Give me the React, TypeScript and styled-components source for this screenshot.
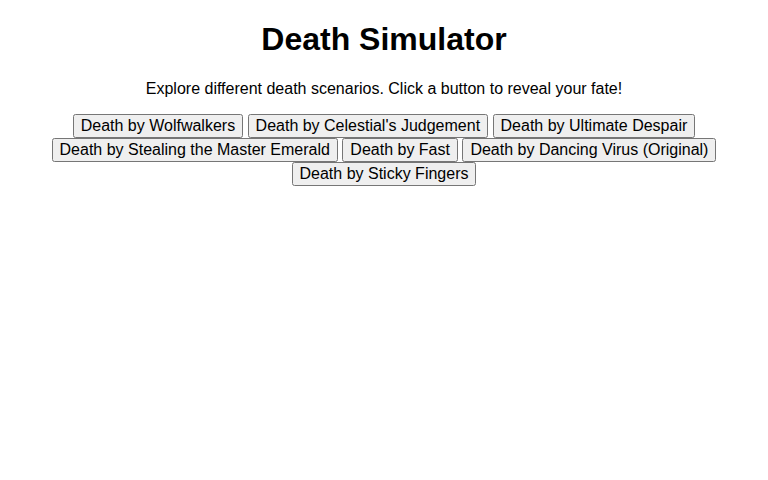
import React, { useState } from "react";
import styled, { createGlobalStyle } from "styled-components";

const GlobalStyle = createGlobalStyle`
    body {
        margin: 0;
        background: #ffffff;
        font-family: "Liberation Sans", Arial, sans-serif;
        color: #000000;
    }
`;

const PageStyled = styled.div`
    text-align: center;
`;

const TitleStyled = styled.h1`
    font-size: 32px;
    font-weight: bold;
    margin: 21.44px 0;
`;

const IntroStyled = styled.p`
    font-size: 16px;
    margin: 16px 0;
`;

const ButtonRowStyled = styled.div`
    display: flex;
    flex-wrap: wrap;
    justify-content: center;
    column-gap: 4.45px;
    padding: 0 50px;
`;

const DeathButtonStyled = styled.button`
    font-family: "Liberation Sans", Arial, sans-serif;
    font-size: 16px;
    line-height: normal;
    padding: 1px 6px;
    color: #000000;
    cursor: pointer;
`;

const FateStyled = styled.p`
    font-size: 16px;
    margin: 16px 0;
`;

const scenarios = [
    "Wolfwalkers",
    "Celestial's Judgement",
    "Ultimate Despair",
    "Stealing the Master Emerald",
    "Fast",
    "Dancing Virus (Original)",
    "Sticky Fingers",
];

export default function App() {
    const [fate, setFate] = useState<string | null>(null);

    return (
        <>
            <GlobalStyle />
            <PageStyled>
                <TitleStyled>Death Simulator</TitleStyled>
                <IntroStyled>
                    Explore different death scenarios. Click a button to reveal your fate!
                </IntroStyled>
                <ButtonRowStyled>
                    {scenarios.map((name) => (
                        <DeathButtonStyled key={name} onClick={() => setFate(name)}>
                            Death by {name}
                        </DeathButtonStyled>
                    ))}
                </ButtonRowStyled>
                {fate && <FateStyled>You have met your end: death by {fate}.</FateStyled>}
            </PageStyled>
        </>
    );
}
